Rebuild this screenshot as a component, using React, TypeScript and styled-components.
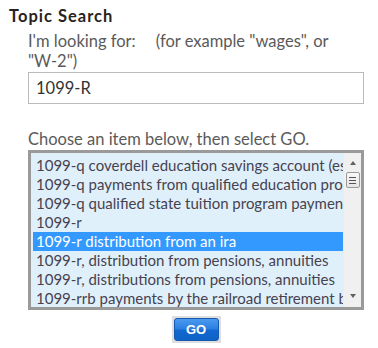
import React from "react";
import styled, { createGlobalStyle } from "styled-components";

const Global = createGlobalStyle`
  html, body { margin: 0; padding: 0; background: #fff; }
  body { font-family: Lato, "Noto Sans", sans-serif; }
`;

const Page = styled.div`
  padding: 6px 0 0 9px;
  width: 369px;
`;

const Title = styled.div`
  font-size: 16.5px;
  font-weight: 700;
  letter-spacing: 1px;
  color: #2a2220;
  line-height: 20px;
`;

const Section = styled.div`
  margin-left: 19px;
  width: 336px;
  display: flex;
  flex-direction: column;
`;

const Hint = styled.div<{ $top: number }>`
  margin-top: ${(p) => p.$top}px;
  font-size: 16.5px;
  line-height: 20px;
  color: #5a5a5a;
  white-space: nowrap;
`;

const Label = styled.span`
  padding-right: 20px;
`;

const SearchInput = styled.input`
  box-sizing: border-box;
  margin-top: 1px;
  width: 336px;
  height: 32px;
  border: 1px solid #bbbbbb;
  padding: 0 0 0 7px;
  font-family: inherit;
  font-size: 16.5px;
  color: #333;
  outline: none;
`;

const ListBox = styled.div`
  box-sizing: border-box;
  margin-top: 1px;
  width: 336px;
  height: 160px;
  border: 3px solid #9a9a9a;
  display: flex;
  background: #e0f0fb;
`;

const Options = styled.div`
  flex: 1;
  padding: 3px 1px 0 2px;
  overflow: hidden;
`;

const Option = styled.div<{ $selected?: boolean }>`
  height: 19px;
  line-height: 19px;
  padding-left: 3px;
  font-size: 15px;
  white-space: nowrap;
  overflow: hidden;
  color: ${(p) => (p.$selected ? "#ffffff" : "#47424f")};
  background: ${(p) => (p.$selected ? "#3399ff" : "transparent")};
`;

const ScrollBar = styled.div`
  width: 17px;
  background: #f0f0f0;
  display: flex;
  flex-direction: column;
  align-items: center;
`;

const Arrow = styled.div<{ $down?: boolean }>`
  width: 0;
  height: 0;
  border-left: 3.5px solid transparent;
  border-right: 3.5px solid transparent;
  ${(p) =>
    p.$down
      ? "border-top: 4px solid #606060; margin-top: auto; margin-bottom: 9px;"
      : "border-bottom: 4px solid #606060; margin-top: 8px;"}
`;

const Thumb = styled.div`
  box-sizing: border-box;
  margin-top: 7px;
  width: 14px;
  height: 16px;
  border: 1px solid #9a9a9a;
  border-radius: 2px;
  background: linear-gradient(#f8f8f8, #e4e4e4);
  display: flex;
  flex-direction: column;
  align-items: center;
  justify-content: center;
  gap: 2px;
`;

const Grip = styled.div`
  width: 7px;
  height: 1px;
  background: #555;
`;

const ButtonRow = styled.div`
  display: flex;
  justify-content: center;
  margin-top: 6px;
`;

const GoFrame = styled.div`
  padding: 2px;
  background: #dedede;
`;

const GoButton = styled.button`
  box-sizing: border-box;
  width: 45px;
  height: 23px;
  border: 1px solid #1559b0;
  border-radius: 3px;
  background: linear-gradient(#4a9af0 0%, #2b7fe0 48%, #1168d0 52%, #0f62c6 100%);
  color: #fff;
  font-family: Arial, "Liberation Sans", sans-serif;
  font-weight: 700;
  font-size: 13px;
  padding: 0;
  display: block;
`;

const items = [
  "1099-q coverdell education savings account (esa)",
  "1099-q payments from qualified education programs",
  "1099-q qualified state tuition program payments",
  "1099-r",
  "1099-r distribution from an ira",
  "1099-r, distribution from pensions, annuities",
  "1099-r, distributions from pensions, annuities",
  "1099-rrb payments by the railroad retirement board",
];

export default function App() {
  return (
    <>
      <Global />
      <Page>
        <Title>Topic Search</Title>
        <Section>
          <Hint $top={5}>
            <Label>I'm looking for:</Label>(for example "wages", or
            <br />
            "W-2")
          </Hint>
          <SearchInput defaultValue="1099-R" />
          <Hint $top={25}>Choose an item below, then select GO.</Hint>
          <ListBox>
            <Options>
              {items.map((t, i) => (
                <Option key={t} $selected={i === 4}>
                  {t}
                </Option>
              ))}
            </Options>
            <ScrollBar>
              <Arrow />
              <Thumb>
                <Grip />
                <Grip />
                <Grip />
              </Thumb>
              <Arrow $down />
            </ScrollBar>
          </ListBox>
          <ButtonRow>
            <GoFrame>
              <GoButton>GO</GoButton>
            </GoFrame>
          </ButtonRow>
        </Section>
      </Page>
    </>
  );
}
